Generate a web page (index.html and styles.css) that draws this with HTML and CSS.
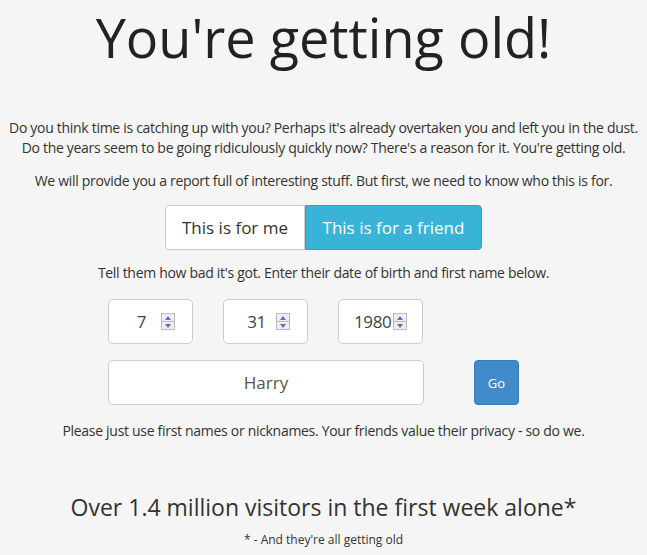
FILE: index.html
```html
<!DOCTYPE html>
<html>
<head>
<meta charset="utf-8">
<link rel="stylesheet" href="styles.css">
</head>
<body>
<main class="page">
  <h1 class="title">You're getting old!</h1>
  <p class="intro">Do you think time is catching up with you? Perhaps it's already overtaken you and left you in the dust.<br>Do the years seem to be going ridiculously quickly now? There's a reason for it. You're getting old.</p>
  <p class="intro2">We will provide you a report full of interesting stuff. But first, we need to know who this is for.</p>
  <div class="toggle">
    <button class="tbtn">This is for me</button>
    <button class="tbtn active">This is for a friend</button>
  </div>
  <p class="tell">Tell them how bad it's got. Enter their date of birth and first name below.</p>
  <div class="form">
    <div class="dates">
      <div class="num"><span class="val">7</span><span class="spin"><i class="up"></i><i class="down"></i></span></div>
      <div class="num"><span class="val">31</span><span class="spin"><i class="up"></i><i class="down"></i></span></div>
      <div class="num"><span class="val">1980</span><span class="spin"><i class="up"></i><i class="down"></i></span></div>
    </div>
    <div class="namerow">
      <div class="name">Harry</div>
      <button class="go">Go</button>
    </div>
  </div>
  <p class="privacy">Please just use first names or nicknames. Your friends value their privacy - so do we.</p>
  <h2 class="visitors">Over 1.4 million visitors in the first week alone*</h2>
  <p class="foot">* - And they're all getting old</p>
</main>
</body>
</html>
```
FILE: styles.css
```css
html, body { margin: 0; padding: 0; }
body {
  background: #f5f5f5;
  font-family: "Open Sans", "Noto Sans", sans-serif;
  color: #333;
  width: 647px;
  height: 555px;
  overflow: hidden;
}
.page {
  display: flex;
  flex-direction: column;
  align-items: center;
  text-align: center;
}
.title {
  margin: 0;
  padding: 0 4px;
  font-weight: 400;
  font-size: 54px;
  line-height: 74px;
  color: #222;
}
.intro {
  margin: 44px 0 0;
  font-size: 14px;
  line-height: 20px;
  letter-spacing: -0.3px;
  white-space: nowrap;
}
.intro2 {
  margin: 13px 0 0;
  font-size: 14px;
  line-height: 20px;
  letter-spacing: -0.3px;
}
.toggle {
  margin-top: 14px;
  display: flex;
}
.tbtn {
  font-family: inherit;
  font-size: 17px;
  height: 45px;
  padding: 0 16px;
  border: 1px solid #ccc;
  background: #fff;
  color: #333;
  border-radius: 4px 0 0 4px;
  width: 140px;
}
.tbtn.active {
  background: #39b3d7;
  border-color: #2da5c9;
  color: #fff;
  border-radius: 0 4px 4px 0;
  width: 177px;
}
.tell {
  margin: 13px 0 0;
  font-size: 14px;
  line-height: 20px;
  letter-spacing: -0.3px;
}
.form {
  margin-top: 16px;
  display: flex;
  flex-direction: column;
  gap: 16px;
  width: 411px;
  margin-right: 20px;
}
.dates {
  display: flex;
  gap: 30px;
}
.num {
  width: 85px;
  height: 45px;
  box-sizing: border-box;
  background: #fff;
  border: 1px solid #ccc;
  border-radius: 5px;
  display: flex;
  align-items: center;
  gap: 2px;
  padding: 0 17px 0 15px;
  font-size: 17px;
  color: #444;
}
.val {
  flex: 1;
  text-align: center;
  white-space: nowrap;
  letter-spacing: -0.4px;
}
.spin {
  flex: none;
  display: flex;
  flex-direction: column;
  width: 14px;
  height: 17px;
  border: 1px solid #bbb;
  box-sizing: border-box;
  background: #eee;
}
.spin i {
  flex: 1;
  position: relative;
  display: block;
}
.spin i.up { border-bottom: 1px solid #bbb; }
.spin i::after {
  content: "";
  position: absolute;
  left: 3px;
  top: 2px;
  border-left: 3px solid transparent;
  border-right: 3px solid transparent;
}
.spin i.up::after { border-bottom: 4px solid #5a6ec0; }
.spin i.down::after { border-top: 4px solid #5a6ec0; top: 2px; }
.namerow {
  display: flex;
  gap: 50px;
}
.name {
  width: 316px;
  height: 45px;
  box-sizing: border-box;
  background: #fff;
  border: 1px solid #ccc;
  border-radius: 5px;
  display: flex;
  align-items: center;
  justify-content: center;
  font-size: 17px;
  color: #555;
}
.go {
  width: 45px;
  height: 45px;
  background: #428bca;
  border: 1px solid #357ebd;
  border-radius: 4px;
  color: #fff;
  font-family: inherit;
  font-size: 13px;
  padding: 0;
}
.privacy {
  margin: 16px 0 0;
  font-size: 14px;
  line-height: 20px;
  letter-spacing: -0.3px;
}
.visitors {
  margin: 51px 0 0;
  font-weight: 400;
  font-size: 23px;
  line-height: 30px;
  color: #333;
}
.foot {
  margin: 10px 0 0;
  font-size: 12px;
  line-height: 16px;
}
```
